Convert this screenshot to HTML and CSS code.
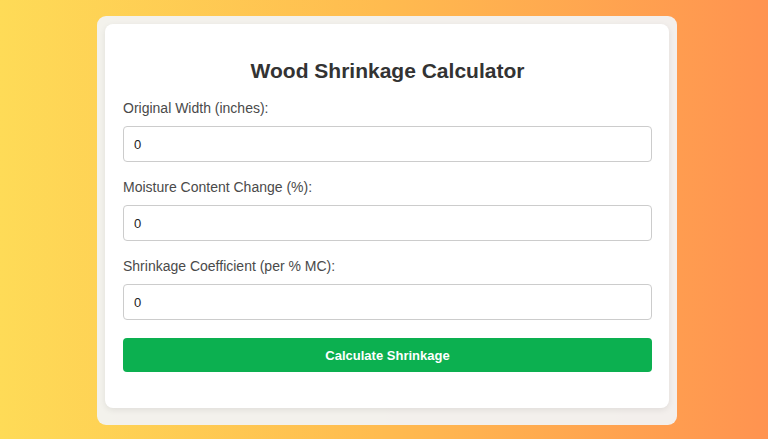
FILE: index.html
```html
<!DOCTYPE html>
<html>
<head>
<meta charset="utf-8">
<link rel="stylesheet" href="styles.css">
</head>
<body>
<div class="frame">
  <div class="card">
    <h2 class="title">Wood Shrinkage Calculator</h2>
    <label class="label">Original Width (inches):</label>
    <input class="input" type="number" value="0">
    <label class="label">Moisture Content Change (%):</label>
    <input class="input" type="number" value="0">
    <label class="label">Shrinkage Coefficient (per % MC):</label>
    <input class="input" type="number" value="0">
    <button class="btn">Calculate Shrinkage</button>
  </div>
</div>
</body>
</html>
```
FILE: styles.css
```css
html, body {
  margin: 0;
  padding: 0;
  height: 100%;
}
body {
  background: linear-gradient(to right, #fedb57, #ffbb4f 50%, #ff9350);
  font-family: "Liberation Sans", Arial, sans-serif;
  display: flex;
  justify-content: center;
  align-items: flex-start;
  padding-top: 16px;
  box-sizing: border-box;
}
.frame {
  width: 580px;
  box-sizing: border-box;
  padding: 8px 8px 17px 8px;
  background: rgba(243, 243, 243, 0.96);
  border-radius: 9px;
  margin-left: 6px;
}
.card {
  background: #fff;
  border-radius: 8px;
  box-shadow: 0 2px 6px rgba(0, 0, 0, 0.08);
  padding: 20px 17px 36px 18px;
  display: flex;
  flex-direction: column;
}
.title {
  margin: 15px 0 17px;
  font-size: 21px;
  line-height: 24px;
  font-weight: bold;
  color: #333;
  text-align: center;
}
.label {
  font-size: 14px;
  line-height: 16px;
  color: #4a4a4a;
  margin-bottom: 10px;
}
.input {
  height: 36px;
  box-sizing: border-box;
  border: 1px solid #ccc;
  border-radius: 4px;
  padding: 0 10px;
  font-family: "Liberation Sans", Arial, sans-serif;
  font-size: 13px;
  color: #222;
  margin: 0 0 17px;
  outline: none;
}
.input::-webkit-inner-spin-button { display: none; }
.btn {
  margin-top: 1px;
  height: 34px;
  border: none;
  border-radius: 4px;
  background: #0cb050;
  color: #fff;
  font-family: "Liberation Sans", Arial, sans-serif;
  font-size: 13px;
  font-weight: bold;
}
```
